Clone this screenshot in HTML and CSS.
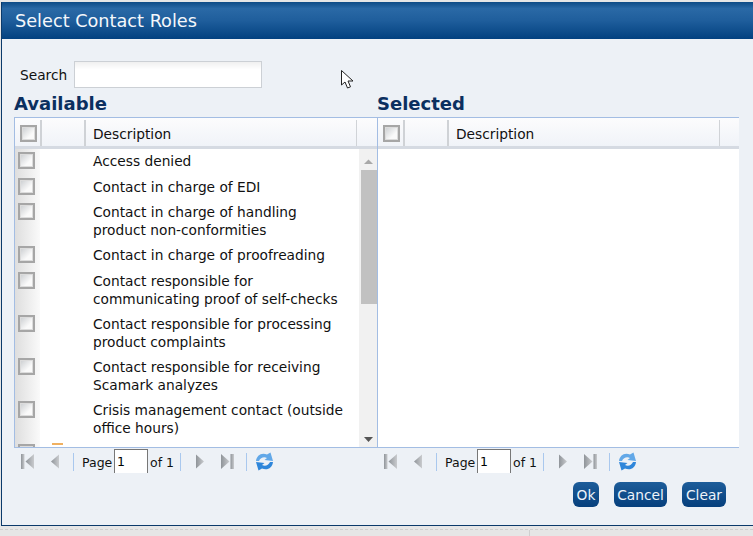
FILE: index.html
```html
<!DOCTYPE html>
<html lang="en">
<head>
<meta charset="utf-8">
<title>Select Contact Roles</title>
<link rel="stylesheet" href="styles.css">
</head>
<body>
<div class="page">
  <div class="dialog">
    <div class="titlebar">Select Contact Roles</div>
    <div class="dialog-body">
      <div class="search-row">
        <label class="search-label" for="search">Search</label>
        <input id="search" class="search-input" type="text">
      </div>
      <div class="panes">
        <section class="pane pane-left">
          <h2 class="pane-title">Available</h2>
          <div class="grid">
            <div class="grid-head">
              <div class="hc hc-check"><span class="cb"></span></div>
              <div class="hc hc-blank"></div>
              <div class="hc hc-desc">Description</div>
              <div class="hc hc-end"></div>
            </div>
            <div class="grid-body">
              <div class="rows">
                <div class="row"><div class="gut"><span class="cb"></span></div><div class="txt">Access denied</div></div>
                <div class="row"><div class="gut"><span class="cb"></span></div><div class="txt">Contact in charge of EDI</div></div>
                <div class="row"><div class="gut"><span class="cb"></span></div><div class="txt">Contact in charge of handling<br>product non-conformities</div></div>
                <div class="row"><div class="gut"><span class="cb"></span></div><div class="txt">Contact in charge of proofreading</div></div>
                <div class="row"><div class="gut"><span class="cb"></span></div><div class="txt">Contact responsible for<br>communicating proof of self-checks</div></div>
                <div class="row"><div class="gut"><span class="cb"></span></div><div class="txt">Contact responsible for processing<br>product complaints</div></div>
                <div class="row"><div class="gut"><span class="cb"></span></div><div class="txt">Contact responsible for receiving<br>Scamark analyzes</div></div>
                <div class="row"><div class="gut"><span class="cb"></span></div><div class="txt">Crisis management contact (outside<br>office hours)</div></div>
                <div class="row"><div class="gut"><span class="cb"></span></div><div class="txt"><span class="peek"></span></div></div>
              </div>
              <div class="scrollbar">
                <svg class="sb-arrow" width="17" height="21" viewBox="0 0 17 21"><path d="M4 15 L8.5 10.5 L13 15 Z" fill="#a8a8a8"/></svg>
                <div class="sb-thumb"></div>
                <div class="sb-spacer"></div>
                <svg class="sb-arrow" width="17" height="14" viewBox="0 0 17 14"><path d="M4 4 L13 4 L8.5 9 Z" fill="#555"/></svg>
              </div>
            </div>
          </div>
          <div class="pager">
            <svg class="pi pi-first" width="15" height="17" viewBox="0 0 15 17"><use href="#i-first"/></svg>
            <svg class="pi pi-prev" width="10" height="17" viewBox="0 0 10 17"><use href="#i-prev"/></svg>
            <span class="sep sep-a"></span>
            <span class="pg-label">Page</span>
            <input class="pg-input" type="text" value="1">
            <span class="pg-of">of 1</span>
            <span class="sep sep-b"></span>
            <svg class="pi pi-next" width="10" height="17" viewBox="0 0 10 17"><use href="#i-next"/></svg>
            <svg class="pi pi-last" width="15" height="17" viewBox="0 0 15 17"><use href="#i-last"/></svg>
            <span class="sep sep-c"></span>
            <svg class="pi pi-refresh" width="19" height="19" viewBox="0 0 19 19"><use href="#i-refresh"/></svg>
          </div>
        </section>
        <section class="pane pane-right">
          <h2 class="pane-title">Selected</h2>
          <div class="grid">
            <div class="grid-head">
              <div class="hc hc-check"><span class="cb"></span></div>
              <div class="hc hc-blank"></div>
              <div class="hc hc-desc">Description</div>
              <div class="hc hc-end"></div>
            </div>
            <div class="grid-body"></div>
          </div>
          <div class="pager">
            <svg class="pi pi-first" width="15" height="17" viewBox="0 0 15 17"><use href="#i-first"/></svg>
            <svg class="pi pi-prev" width="10" height="17" viewBox="0 0 10 17"><use href="#i-prev"/></svg>
            <span class="sep sep-a"></span>
            <span class="pg-label">Page</span>
            <input class="pg-input" type="text" value="1">
            <span class="pg-of">of 1</span>
            <span class="sep sep-b"></span>
            <svg class="pi pi-next" width="10" height="17" viewBox="0 0 10 17"><use href="#i-next"/></svg>
            <svg class="pi pi-last" width="15" height="17" viewBox="0 0 15 17"><use href="#i-last"/></svg>
            <span class="sep sep-c"></span>
            <svg class="pi pi-refresh" width="19" height="19" viewBox="0 0 19 19"><use href="#i-refresh"/></svg>
          </div>
        </section>
      </div>
      <div class="actions">
        <button class="btn btn-ok" type="button">Ok</button>
        <button class="btn btn-cancel" type="button">Cancel</button>
        <button class="btn btn-clear" type="button">Clear</button>
      </div>
    </div>
  </div>
  <div class="page-foot"><div class="foot-left"></div><div class="foot-right"></div></div>
  <svg class="cursor" width="18" height="22" viewBox="0 0 18 22"><path d="M1.5 1.5 L1.5 16 L5 13 L7.5 19 L10.5 17.8 L8 12 L13 12 Z" fill="#fff" stroke="#222" stroke-width="1"/></svg>
</div>
<svg class="defs" width="0" height="0">
  <defs>
    <linearGradient id="g-icon" x1="0" y1="0" x2="1" y2="0"><stop offset="0" stop-color="#8f9499"/><stop offset="1" stop-color="#c9cbce"/></linearGradient>
    <g id="i-first"><rect x="1" y="1" width="3.5" height="15" fill="url(#g-icon)"/><path d="M14 1 L14 16 L5.5 8.5 Z" fill="url(#g-icon)"/></g>
    <g id="i-prev"><path d="M9 1.5 L9 15.5 L1 8.5 Z" fill="url(#g-icon)"/></g>
    <g id="i-next"><path d="M1 1.5 L1 15.5 L9 8.5 Z" fill="url(#g-icon)"/></g>
    <g id="i-last"><path d="M1 1 L1 16 L9.5 8.5 Z" fill="url(#g-icon)"/><rect x="10.5" y="1" width="3.5" height="15" fill="url(#g-icon)"/></g>
    <g id="i-refresh">
      <path d="M1 9 C1.5 3.5 6.5 0 12 2.5 L15.5 0.5 L18 9 L9.5 8 L12 6 C9 4.5 5.5 5.5 4 9 Z" fill="#62a8e8"/>
      <path d="M18 10 C17.5 15.5 12.5 19 7 16.5 L3.5 18.5 L1 10 L9.5 11 L7 13 C10 14.5 13.5 13.5 15 10 Z" fill="#2f86da"/>
    </g>
  </defs>
</svg>
</body>
</html>
```
FILE: styles.css
```css
* { box-sizing: border-box; }
html, body { margin: 0; padding: 0; }
body { font-family: "DejaVu Sans", sans-serif; color: #111; background: #e6e6e6; }
.page { position: relative; width: 753px; height: 536px; overflow: hidden; background: #e6e6e6; display: flex; flex-direction: column; }
.defs { position: absolute; }
.dialog { margin: 2px 0 0 1px; width: 752px; height: 524px; flex: none; border-left: 1px solid #0b3a6b; border-bottom: 1px solid #0b3a6b; background: #edf1f6; display: flex; flex-direction: column; }
.titlebar { height: 37px; flex: none; padding: 2px 0 0 13px; line-height: 35px; font-size: 17.7px; color: #f4f7fb; background: linear-gradient(#0e4b86 0, #2a69a6 18%, #1f5e9c 50%, #024180 100%); }
.dialog-body { flex: 1; display: flex; flex-direction: column; padding: 22px 0 0 12px; min-height: 0; }
.search-row { display: flex; align-items: center; height: 27px; padding-left: 6px; flex: none; }
.search-label { font-size: 13.75px; width: 54px; }
.search-input { width: 188px; height: 27px; border: 1px solid #ccd0d5; background: linear-gradient(#f0f0f0, #fff 30%); padding: 0; outline: none; }
.panes { display: flex; flex: none; margin-top: 3px; }
.pane { flex: none; }
.pane-left { width: 363px; }
.pane-right { width: 362px; }
.pane-title { margin: 0; height: 26px; font-size: 18px; line-height: 26px; font-weight: 700; color: #0b2f5f; }
.grid { height: 331px; background: #fff; border-top: 1px solid #a3bde3; border-bottom: 1px solid #a3bde3; border-left: 1px solid #a3bde3; display: flex; flex-direction: column; }
.grid-head { height: 31px; flex: none; display: flex; padding-top: 2px; background: linear-gradient(#fcfcfd, #f0f3f8); border-bottom: 3px solid #d5dae2; }
.hc { height: 100%; display: flex; align-items: center; }
.hc-check { width: 27px; border-right: 2px solid #cfd2d6; padding-left: 5px; }
.hc-blank { width: 44px; border-right: 2px solid #cfd2d6; }
.hc-desc { width: 271px; border-right: 1px solid #d0d3d7; padding: 2px 0 0 7px; font-size: 13.75px; }
.hc-end { flex: 1; }
.cb { display: block; width: 17px; height: 17px; border: 2px solid #a6a6a6; box-shadow: inset 0 0 0 1px #dcdcdc; background: linear-gradient(135deg, #c9cccf, #fafafa 65%); }
.grid-body { flex: 1; min-height: 0; display: flex; overflow: hidden; background: #fff; }
.rows { width: 344px; flex: none; }
.row { display: flex; }
.gut { width: 25px; flex: none; padding: 3px 0 0 3px; background: linear-gradient(90deg, #dedede, #fafafa); }
.txt { flex: 1; padding: 3px 0 4px 53px; font-size: 13.75px; line-height: 18px; min-height: 25.5px; }
.peek { display: block; width: 11px; height: 2px; margin: -1px 0 0 -41px; background: #f0b060; }
.scrollbar { width: 18px; flex: none; background: #f1f1f1; display: flex; flex-direction: column; align-items: flex-end; }
.sb-arrow { flex: none; display: block; }
.sb-thumb { width: 16px; height: 134px; flex: none; background: #c1c1c1; }
.sb-spacer { flex: 1; }
.pager { height: 30px; display: flex; align-items: flex-start; font-size: 12.5px; }
.pi { flex: none; display: block; margin-top: 5px; }
.pi-first { margin-left: 6px; }
.pi-prev { margin-left: 15px; }
.sep { width: 1px; height: 18px; flex: none; margin-top: 5px; background: #a9c8ee; }
.sep-a { margin-left: 13px; }
.pg-label { margin: 7px 0 0 8px; width: 32px; }
.pg-input { width: 34px; height: 24px; margin-top: 1px; border: 1px solid #777; border-bottom: 0; padding: 0 0 0 2px; font: inherit; background: #fff; outline: none; }
.pg-of { margin: 7px 0 0 2px; width: 30px; }
.pi-next { margin-left: 14px; }
.pi-last { margin-left: 15px; }
.sep-c { margin-left: 11px; }
.pi-refresh { margin: 4px 0 0 8px; }
.actions { display: flex; flex: none; justify-content: flex-end; gap: 15px; padding: 4px 27px 0 0; }
.btn { height: 25px; padding: 0; border: 0; border-radius: 6px; color: #eef4fa; font-family: inherit; font-size: 13.75px; background: linear-gradient(#1d5d9a, #063f7c); }
.btn-ok { width: 26px; }
.btn-cancel { width: 53px; }
.btn-clear { width: 44px; }
.page-foot { flex: 1; display: flex; border-top: 1px dashed #cfcfcf; margin-top: 3px; }
.foot-left { width: 530px; border-right: 1px solid #cfcfcf; }
.cursor { position: absolute; left: 340px; top: 69px; }
```
